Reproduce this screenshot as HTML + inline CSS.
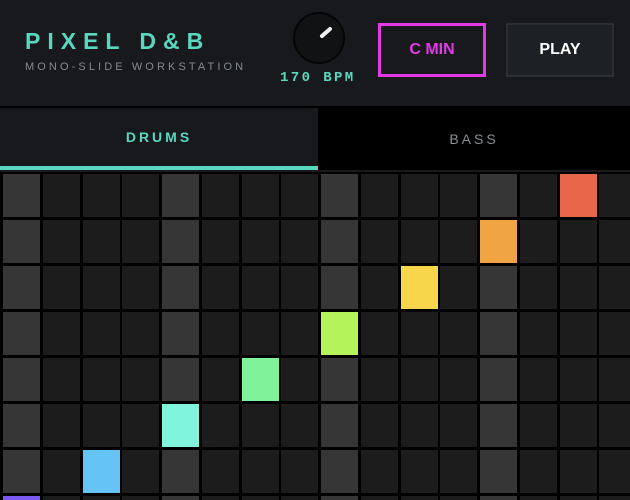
<!DOCTYPE html>
<html style="overflow:hidden;height:500px"><head><style>
body{margin:0;width:630px;height:500px;background:#000;overflow:hidden;position:relative;font-family:"Liberation Sans",sans-serif}
.hd{position:absolute;left:0;top:0;width:630px;height:106px;background:#17191d}
.t{position:absolute;left:25px;top:28px;font-size:23px;font-weight:bold;color:#5ad8bf;letter-spacing:7px}
.s{position:absolute;left:25px;top:61px;font-size:11px;color:#858a90;letter-spacing:3.1px}
.knob{position:absolute;left:293px;top:12px;width:48px;height:48px;border-radius:50%;background:#101214;border:2px solid #050505}
.bpm{position:absolute;left:280px;top:70px;font-family:"Liberation Mono",monospace;font-weight:bold;font-size:14px;color:#5ad8bf;letter-spacing:2.4px}
.b{position:absolute;top:23px;height:48px;width:102px;box-sizing:border-box;display:flex;align-items:center;justify-content:center;font-weight:bold;font-size:16px}
.tab{position:absolute;top:108px;height:62px;width:318px;display:flex;align-items:center;justify-content:center;font-size:14px;letter-spacing:3px}
.c{position:absolute;width:37px;height:43px;background:#1c1c1c}
.c.l{background:#363636}
#g{position:absolute;left:0;top:0;width:630px;height:500px;overflow:hidden}
</style></head><body>
<div class="hd"></div>
<div class="t">PIXEL D&amp;B</div>
<div class="s">MONO-SLIDE WORKSTATION</div>
<div class="knob"></div>
<svg style="position:absolute;left:0;top:0" width="630" height="100"><line x1="322" y1="36" x2="330" y2="29" stroke="#eee" stroke-width="4" stroke-linecap="round"/></svg>
<div class="bpm">170 BPM</div>
<div class="b" style="left:378px;width:108px;height:54px;border:3px solid #e23ae6;color:#e23ae6;background:#17191d">C MIN</div>
<div class="b" style="left:506px;width:108px;height:54px;border:2px solid #2b2e33;background:#1d2025;color:#fff">PLAY</div>
<div class="tab" style="left:0;background:#17191d;color:#5ad8bf;font-weight:bold;border-bottom:4px solid #5ad8bf;height:58px">DRUMS</div>
<div class="tab" style="left:318px;width:312px;background:#000;color:#8a8f95">BASS</div>
<div style="position:absolute;left:0;top:170px;width:630px;height:2px;background:#1a1a1a"></div>
<div id="g"></div>
<script>
var cols={"0,14":"#e8674a","1,12":"#f0a443","2,10":"#f7d64c","3,8":"#b5f35a","4,6":"#80f29a","5,4":"#80f5dc","6,2":"#66c3f5","7,0":"#7a5af0"};
var h="";
for(var r=0;r<8;r++)for(var c=0;c<16;c++){var k=r+","+c;var st="left:"+(3+c*39.75)+"px;top:"+(174+r*46)+"px;height:"+(r==7?4:43)+"px;";if(cols[k])st+="background:"+cols[k];h+='<div class="c'+(c%4==0?' l':'')+'" style="'+st+'"></div>';}
document.getElementById("g").innerHTML=h;
</script>
</body></html>
